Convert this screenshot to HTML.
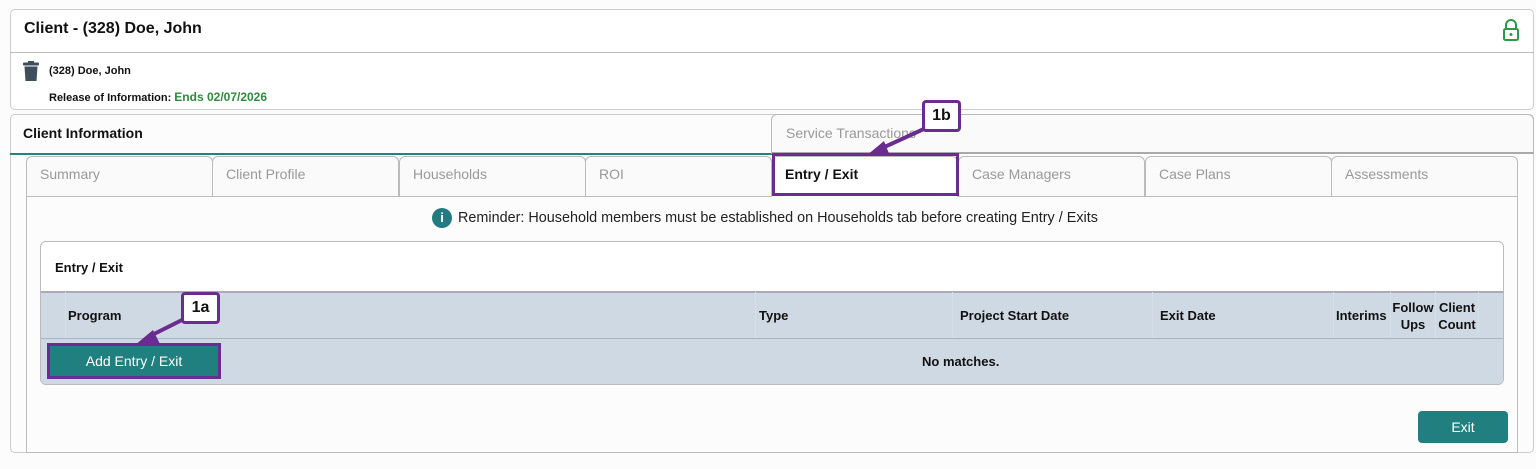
<!DOCTYPE html>
<html><head><meta charset="utf-8"><style>
*{box-sizing:border-box;margin:0;padding:0}
body{width:1536px;height:469px;background:#fcfcfc;font-family:"Liberation Sans",Arial,sans-serif;position:relative;overflow:hidden;color:#111}
.a{position:absolute}
.b{font-weight:bold}
.tab{position:absolute;top:156px;height:40px;border:1px solid #bbb;border-bottom:none;border-radius:6px 6px 0 0;background:#fafafa;color:#999;font-size:14px;padding:9px 0 0 13px;width:187px}
.th{position:absolute;font-size:13px;font-weight:bold;color:#111}
.div{position:absolute;top:292px;width:1px;height:46px;background:#d6dee6}
</style></head><body>
<div class="a" style="left:10px;top:9px;width:1524px;height:101px;border:1px solid #ccc;border-radius:5px;background:#fff"></div>
<div class="a" style="left:10px;top:52px;width:1524px;height:1px;background:#bbb"></div>
<div class="a b" style="left:24px;top:20px;font-size:16px">Client - (328) Doe, John</div>
<svg class="a" style="left:1502px;top:18px" width="18" height="24" viewBox="0 0 18 24"><path d="M4 11V7a5 5 0 0 1 10 0v4" fill="none" stroke="#2e9a48" stroke-width="2"/><rect x="2" y="11" width="14" height="11" rx="1.5" fill="none" stroke="#2e9a48" stroke-width="2"/><circle cx="9" cy="16.5" r="1.5" fill="#2e9a48"/></svg>
<svg class="a" style="left:23px;top:61px" width="16" height="20" viewBox="0 0 16 20"><rect x="0" y="1.5" width="16" height="3" rx="1" fill="#3d4f5c"/><rect x="5" y="0" width="6" height="2" fill="#3d4f5c"/><path d="M1.5 5.5h13l-1 14.5h-11z" fill="#3d4f5c"/></svg>
<div class="a b" style="left:49px;top:65px;font-size:11px">(328) Doe, John</div>
<div class="a b" style="left:49px;top:90px;font-size:11px">Release of Information: <span style="color:#2e8b3e;font-size:12px">Ends 02/07/2026</span></div>
<div class="a" style="left:10px;top:114px;width:1524px;height:339px;border:1px solid #ccc;border-radius:5px;background:#fcfcfc"></div>
<div class="a b" style="left:23px;top:125px;font-size:14px">Client Information</div>
<div class="a" style="left:10px;top:153px;width:762px;height:2px;background:#2a7f7f"></div>
<div class="a" style="left:771px;top:114px;width:763px;height:40px;border:1px solid #bbb;border-bottom:2px solid #aaa;border-radius:6px 6px 0 0;background:#fafafa;color:#999;font-size:14px;padding:10px 0 0 14px">Service Transactions</div>
<div class="a" style="left:26px;top:195px;width:1492px;height:258px;border:1px solid #bbb;border-top:2px solid #bbb;background:#fcfcfc"></div>
<div class="tab" style="left:26px">Summary</div>
<div class="tab" style="left:212px">Client Profile</div>
<div class="tab" style="left:399px">Households</div>
<div class="tab" style="left:585px">ROI</div>
<div class="tab" style="left:771px;background:#fff;color:#111;font-weight:bold;height:41px">Entry / Exit</div>
<div class="tab" style="left:958px">Case Managers</div>
<div class="tab" style="left:1145px">Case Plans</div>
<div class="tab" style="left:1331px">Assessments</div>
<div class="a" style="left:772px;top:153px;width:187px;height:43px;border:3px solid #6a2c91"></div>
<div class="a" style="left:432px;top:208px;width:20px;height:20px;border-radius:50%;background:#227b80;color:#fff;font-size:13px;font-weight:bold;text-align:center;line-height:20px">i</div>
<div class="a" style="left:458px;top:210px;font-size:14.4px;color:#222">Reminder: Household members must be established on Households tab before creating Entry / Exits</div>
<div class="a" style="left:40px;top:241px;width:1464px;height:144px;border:1px solid #bbb;border-radius:6px;background:#fff;overflow:hidden">
 <div class="a" style="left:0;top:49px;width:1464px;height:95px;background:#cfd9e3;border-top:2px solid #aab"></div>
 <div class="a" style="left:0;top:96px;width:1464px;height:1px;background:#aab4bf"></div>
</div>
<div class="a b" style="left:55px;top:260px;font-size:13px">Entry / Exit</div>
<div class="div" style="left:65px"></div><div class="div" style="left:755px"></div><div class="div" style="left:952px"></div><div class="div" style="left:1152px"></div><div class="div" style="left:1333px"></div><div class="div" style="left:1390px"></div><div class="div" style="left:1435px"></div><div class="div" style="left:1478px"></div>
<div class="th" style="left:68px;top:308px">Program</div>
<div class="th" style="left:759px;top:308px">Type</div>
<div class="th" style="left:960px;top:308px">Project Start Date</div>
<div class="th" style="left:1160px;top:308px">Exit Date</div>
<div class="th" style="left:1336px;top:308px">Interims</div>
<div class="th" style="left:1391px;top:299px;text-align:center;width:44px;line-height:17px">Follow Ups</div>
<div class="th" style="left:1436px;top:299px;text-align:center;width:42px;line-height:17px">Client Count</div>
<div class="a" style="left:47px;top:343px;width:174px;height:36px;background:#20807f;border:3px solid #6a2c91;color:#fff;font-size:14px;text-align:center;line-height:30px">Add Entry / Exit</div>
<div class="th" style="left:922px;top:354px">No matches.</div>
<div class="a" style="left:1418px;top:411px;width:90px;height:32px;background:#21807f;border-radius:4px;color:#fff;font-size:14px;text-align:center;line-height:32px">Exit</div>
<svg class="a" style="left:0;top:0" width="1536" height="469">
<g stroke="#6a2c91" stroke-width="4" fill="#6a2c91">
<line x1="926" y1="128" x2="880" y2="149"/><polygon points="866,156 884,141 890,156" stroke="none"/>
<line x1="186" y1="318" x2="150" y2="336"/><polygon points="135,345 153,330 160,344" stroke="none"/>
</g></svg>
<div class="a b" style="left:922px;top:100px;width:39px;height:32px;background:#fff;border:3px solid #6a2c91;border-radius:4px;font-size:16px;text-align:center;line-height:26px">1b</div>
<div class="a b" style="left:181px;top:292px;width:39px;height:32px;background:#fff;border:3px solid #6a2c91;border-radius:4px;font-size:16px;text-align:center;line-height:26px">1a</div>
</body></html>
